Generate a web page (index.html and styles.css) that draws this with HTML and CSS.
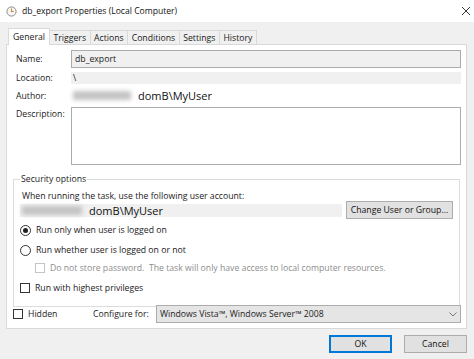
FILE: index.html
```html
<!DOCTYPE html>
<html lang="en">
<head>
    <meta charset="UTF-8">
    <title>db_export Properties (Local Computer)</title>
    <link rel="stylesheet" href="styles.css">
</head>
<body>
    <div class="window">
        <div class="titlebar">
            <svg class="app-icon" width="11" height="11" viewBox="0 0 11 11">
                <circle cx="5.5" cy="5.5" r="4.6" fill="#f7f7f7" stroke="#8a8a8a" stroke-width="1"/>
                <path d="M5.5 2.6 V5.5 H7.8" fill="none" stroke="#d08a2c" stroke-width="1.1"/>
            </svg>
            <span class="title">db_export Properties (Local Computer)</span>
            <svg class="close" width="10" height="10" viewBox="0 0 10 10">
                <path d="M1 1 L9 9 M9 1 L1 9" stroke="#222" stroke-width="0.9"/>
            </svg>
        </div>

        <div class="content">
            <div class="tabs">
                <div class="tab active">General</div>
                <div class="tab">Triggers</div>
                <div class="tab">Actions</div>
                <div class="tab">Conditions</div>
                <div class="tab">Settings</div>
                <div class="tab">History</div>
            </div>

            <div class="panel">
                <div class="form">
                    <div class="label">Name:</div>
                    <div class="textbox readonly">db_export</div>

                    <div class="label">Location:</div>
                    <div class="plainbox">\</div>

                    <div class="label">Author:</div>
                    <div class="account"><span class="blur"></span><span class="user">domB\MyUser</span></div>

                    <div class="label top">Description:</div>
                    <div class="textarea"></div>
                </div>

                <fieldset class="group">
                    <legend>Security options</legend>
                    <div class="hint">When running the task, use the following user account:</div>
                    <div class="account-row">
                        <div class="account-field"><span class="blur short"></span><span class="user">domB\MyUser</span></div>
                        <div class="button change">Change User or Group...</div>
                    </div>
                    <div class="option first"><span class="radio checked"></span>Run only when user is logged on</div>
                    <div class="option"><span class="radio"></span>Run whether user is logged on or not</div>
                    <div class="option sub disabled"><span class="check"></span>Do not store password.&nbsp; The task will only have access to local computer resources.</div>
                    <div class="option last"><span class="check"></span>Run with highest privileges</div>
                </fieldset>

                <div class="bottom-row">
                    <div class="option hidden"><span class="check"></span>Hidden</div>
                    <div class="configure-label">Configure for:</div>
                    <div class="select">
                        <span>Windows Vista™, Windows Server™ 2008</span>
                        <svg width="8" height="5" viewBox="0 0 8 5"><path d="M0.5 0.5 L4 4 L7.5 0.5" fill="none" stroke="#777" stroke-width="1"/></svg>
                    </div>
                </div>
            </div>
        </div>

        <div class="footer">
            <div class="button ok">OK</div>
            <div class="button">Cancel</div>
        </div>
    </div>
</body>
</html>
```

FILE: styles.css
```css
* {
    margin: 0;
    padding: 0;
    box-sizing: border-box;
}

body {
    width: 474px;
    height: 359px;
    overflow: hidden;
    font-family: 'Open Sans', 'Noto Sans', sans-serif;
    font-size: 8.7px;
    color: #1a1a1a;
    background: #f0f0f0;
}

.window {
    width: 474px;
    height: 359px;
    display: flex;
    flex-direction: column;
    background: #f0f0f0;
}

.titlebar {
    height: 22px;
    background: #ffffff;
    display: flex;
    align-items: center;
    padding: 0 3px 0 6px;
}

.app-icon {
    margin-right: 5px;
}

.title {
    font-size: 8.6px;
    flex: 1;
    color: #111;
}

.content {
    padding: 6px 7px 0 6px;
}

.tabs {
    display: flex;
    align-items: flex-end;
    height: 16px;
    padding-left: 3px;
    position: relative;
    z-index: 2;
}

.tab {
    height: 14px;
    padding: 0 3.5px;
    border: 1px solid #d9d9d9;
    border-bottom: none;
    margin-left: -1px;
    display: flex;
    align-items: center;
    background: #f0f0f0;
    color: #1a1a1a;
}

.tab.active {
    height: 17px;
    margin-bottom: -1px;
    background: #ffffff;
    padding: 0 4px;
}

.panel {
    background: #ffffff;
    border: 1px solid #d9d9d9;
    height: 285px;
    padding: 5px 5px 0 9px;
}

.form {
    display: grid;
    grid-template-columns: 55px 1fr;
    grid-template-rows: 18px 12px 15px 58px;
    row-gap: 4px;
    align-items: center;
}

.label {
    color: #1a1a1a;
}

.label.top {
    align-self: start;
    padding-top: 1px;
}

.textbox {
    height: 18px;
    border: 1px solid #acacac;
    background: #f0f0f0;
    padding: 0 3px;
    display: flex;
    align-items: center;
}

.plainbox {
    height: 12px;
    background: #f0f0f0;
    padding: 0 2px;
    display: flex;
    align-items: center;
    line-height: 1;
}

.account {
    display: flex;
    align-items: center;
    height: 15px;
}

.blur {
    display: inline-block;
    width: 58px;
    height: 9px;
    background: #c4c4c4;
    filter: blur(2px);
    margin-left: 2px;
}

.blur.short {
    width: 60px;
    margin-left: 2px;
}

.user {
    font-size: 11px;
    color: #111;
    margin-left: 7px;
}

.textarea {
    height: 58px;
    border: 1px solid #acacac;
    background: #ffffff;
}

.group {
    margin: 8px 0 0 -3px;
    width: 447px;
    border: 1px solid #dcdcdc;
    padding: 0 6px 11px 6px;
}

.group legend {
    padding: 0 1px;
    color: #1a1a1a;
}

.hint {
    height: 14px;
    margin-top: 4px;
    padding-left: 2px;
    display: flex;
    align-items: center;
}

.account-row {
    display: flex;
    align-items: center;
    margin-top: -2px;
    height: 18px;
}

.account-field {
    width: 322px;
    height: 13px;
    background: #f0f0f0;
    display: flex;
    align-items: center;
}

.button {
    height: 18px;
    border: 1px solid #adadad;
    background: #e1e1e1;
    display: flex;
    align-items: center;
    justify-content: center;
    width: 63px;
    color: #111;
}

.button.change {
    width: 107px;
    margin-left: 4px;
}

.option {
    display: flex;
    align-items: center;
    height: 14px;
    margin-top: 6px;
}

.option.first {
    margin-top: 4px;
}

.option.sub {
    padding-left: 15px;
    margin-top: 4px;
}

.option.disabled {
    color: #8d8d8d;
}

.option.last {
    margin-top: 6px;
}

.radio {
    width: 11px;
    height: 11px;
    border: 1px solid #333;
    border-radius: 50%;
    margin-right: 5px;
    display: flex;
    align-items: center;
    justify-content: center;
}

.radio.checked::after {
    content: '';
    width: 5px;
    height: 5px;
    border-radius: 50%;
    background: #222;
}

.check {
    width: 10px;
    height: 10px;
    border: 1px solid #333;
    margin-right: 5px;
    background: #fff;
}

.disabled .check {
    border-color: #c4c4c4;
}

.bottom-row {
    display: flex;
    align-items: center;
    margin: -2px 0 0 -3px;
    height: 18px;
}

.option.hidden {
    margin-top: 0;
    width: 80px;
}

.configure-label {
    width: 63px;
}

.select {
    width: 305px;
    height: 18px;
    border: 1px solid #acacac;
    background: #e5e5e5;
    display: flex;
    align-items: center;
    justify-content: space-between;
    padding: 0 3px 0 3px;
    color: #222;
}

.footer {
    display: flex;
    justify-content: flex-end;
    gap: 12px;
    padding: 6px 7px 0 0;
}

.button.ok {
    border: 1px solid #0078d7;
    box-shadow: inset 0 0 0 1px #0078d7;
}
```
